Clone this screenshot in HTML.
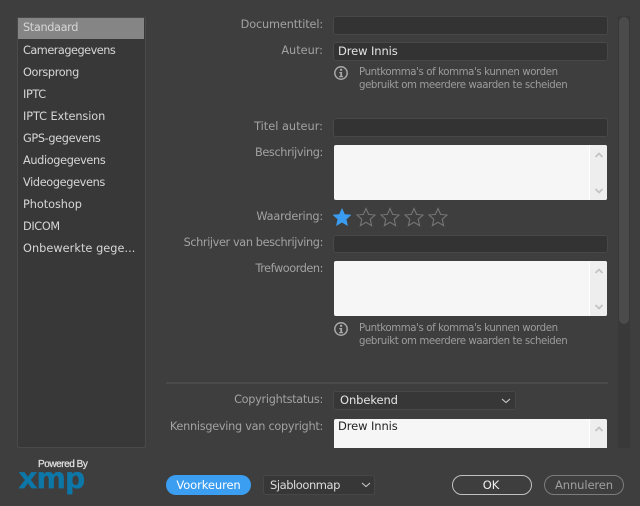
<!DOCTYPE html>
<html><head><meta charset="utf-8"><style>
*{box-sizing:border-box}
html,body{margin:0;padding:0;width:640px;height:506px;overflow:hidden;background:#3e3e3e}
body{position:relative;font-family:"DejaVu Sans",sans-serif;font-size:11px;color:#d8d8d8}
.a{position:absolute;white-space:nowrap}
.li{position:absolute;left:23px;height:22px;line-height:21px;color:#d6d6d6;font-size:11.3px;letter-spacing:-.36px;white-space:nowrap}
.lb{position:absolute;right:317px;text-align:right;color:#a2a2a2;font-size:11.3px;letter-spacing:-.3px;white-space:nowrap;line-height:16px}
.f{position:absolute;left:333px;width:275px;height:19px;background:#333;border:1px solid #484848;border-radius:3px;color:#e4e4e4;font-size:11.5px;line-height:17px;padding-left:4px;letter-spacing:-.1px}
.ta{position:absolute;left:334px;width:273px;background:#f6f6f6;border-radius:2px;overflow:hidden}
.sb{position:absolute;right:0;top:0;bottom:0;width:18px;background:#eeeeee;border-left:1px solid #fff}
.inf{position:absolute;left:359px;color:#9c9c9c;font-size:10.2px;line-height:13px;letter-spacing:-.4px;white-space:nowrap}
.btn{position:absolute;top:475px;height:20px;border-radius:10px;text-align:center;line-height:18px;font-size:11.5px;letter-spacing:-.1px}
</style></head><body>
<div class="a" style="left:17px;top:17px;width:129px;height:431px;background:#383838;border:1px solid #4a4a4a;border-radius:2px"></div>
<div class="a" style="left:18px;top:18px;width:126px;height:21px;background:#858585"></div>
<div class="li" style="top:17px">Standaard</div>
<div class="li" style="top:40px;letter-spacing:-.5px">Cameragegevens</div>
<div class="li" style="top:62px">Oorsprong</div>
<div class="li" style="top:84px">IPTC</div>
<div class="li" style="top:106px;letter-spacing:-.08px">IPTC Extension</div>
<div class="li" style="top:128px">GPS-gegevens</div>
<div class="li" style="top:150px">Audiogegevens</div>
<div class="li" style="top:172px">Videogegevens</div>
<div class="li" style="top:194px;letter-spacing:-.05px">Photoshop</div>
<div class="li" style="top:216px">DICOM</div>
<div class="li" style="top:238px;letter-spacing:.05px">Onbewerkte gege...</div>

<div class="lb" style="top:17px;letter-spacing:-.15px">Documenttitel:</div>
<div class="lb" style="top:43px;letter-spacing:0">Auteur:</div>
<div class="lb" style="top:119px;letter-spacing:.02px">Titel auteur:</div>
<div class="lb" style="top:145px;letter-spacing:-.37px">Beschrijving:</div>
<div class="lb" style="top:209px;letter-spacing:-.2px">Waardering:</div>
<div class="lb" style="top:235px;letter-spacing:-.39px">Schrijver van beschrijving:</div>
<div class="lb" style="top:261px;letter-spacing:-.45px">Trefwoorden:</div>
<div class="lb" style="top:392px">Copyrightstatus:</div>
<div class="lb" style="top:419px;letter-spacing:-.28px">Kennisgeving van copyright:</div>

<div class="f" style="top:16px"></div>
<div class="f" style="top:42px">Drew Innis</div>
<div class="f" style="top:118px"></div>
<div class="f" style="top:235px;height:18px"></div>

<svg class="a" style="left:333px;top:65px" width="16" height="16" viewBox="0 0 16 16"><circle cx="8" cy="8" r="6.2" fill="none" stroke="#a8a8a8" stroke-width="1.5"/><rect x="7" y="3.8" width="2.2" height="2" fill="#a8a8a8"/><path d="M6.3 7h2.8v4h1v1.2H6.2V11h1.1V8.2h-1z" fill="#a8a8a8"/></svg>
<div class="inf" style="top:66px">Puntkomma's of komma's kunnen worden<br>gebruikt om meerdere waarden te scheiden</div>
<svg class="a" style="left:333px;top:321px" width="16" height="16" viewBox="0 0 16 16"><circle cx="8" cy="8" r="6.2" fill="none" stroke="#a8a8a8" stroke-width="1.5"/><rect x="7" y="3.8" width="2.2" height="2" fill="#a8a8a8"/><path d="M6.3 7h2.8v4h1v1.2H6.2V11h1.1V8.2h-1z" fill="#a8a8a8"/></svg>
<div class="inf" style="top:322px">Puntkomma's of komma's kunnen worden<br>gebruikt om meerdere waarden te scheiden</div>

<div class="ta" style="top:145px;height:55px"><div class="sb"><svg class="a" style="left:4px;top:5px" width="10" height="45" viewBox="0 0 10 45"><path d="M1.5 7L5 3.5 8.500 7M1.500 39L5 42.500 8.500 39" fill="none" stroke="#c4c4c4" stroke-width="1.800"/></svg></div></div>
<div class="ta" style="top:261px;height:55px"><div class="sb"><svg class="a" style="left:4px;top:5px" width="10" height="45" viewBox="0 0 10 45"><path d="M1.5 7L5 3.5 8.500 7M1.500 39L5 42.500 8.500 39" fill="none" stroke="#c4c4c4" stroke-width="1.800"/></svg></div></div>
<div class="ta" style="top:419px;height:29px;border-radius:2px 2px 0 0;color:#222;font-size:11.500px;line-height:15px;padding-left:4px;letter-spacing:-.1px">Drew Innis<div class="sb"><svg class="a" style="left:4px;top:5px" width="10" height="12" viewBox="0 0 10 12"><path d="M1.500 7L5 3.500 8.500 7" fill="none" stroke="#c4c4c4" stroke-width="1.800"/></svg></div></div>

<svg class="a" style="left:330px;top:205px" width="120" height="24" viewBox="0 0 120 24">
<path d="M12 3.500l2.600 5.900 6.400.6-4.800 4.300 1.400 6.300L12 17.300 6.400 20.600l1.400-6.300L3 10l6.400-.6z" fill="#3a9cf0" stroke="#3a9cf0" stroke-width=".5"/>
<g fill="none" stroke="#757575" stroke-width="1.100">
<path transform="translate(24)" d="M12 3.500l2.600 5.900 6.400.6-4.800 4.300 1.400 6.300L12 17.300 6.400 20.600l1.400-6.300L3 10l6.400-.6z"/>
<path transform="translate(48)" d="M12 3.500l2.600 5.900 6.400.6-4.800 4.300 1.400 6.300L12 17.300 6.400 20.600l1.400-6.300L3 10l6.400-.6z"/>
<path transform="translate(72)" d="M12 3.500l2.600 5.900 6.400.6-4.800 4.300 1.400 6.300L12 17.300 6.400 20.600l1.400-6.300L3 10l6.400-.6z"/>
<path transform="translate(96)" d="M12 3.500l2.600 5.900 6.400.6-4.800 4.300 1.400 6.300L12 17.300 6.400 20.600l1.400-6.300L3 10l6.400-.6z"/>
</g></svg>

<div class="a" style="left:38px;top:459px;font-family:'Liberation Sans',sans-serif;font-size:10px;color:#e0e0e0;letter-spacing:-.45px;-webkit-text-stroke:.25px #e0e0e0">Powered By</div>
<svg class="a" style="left:15px;top:466px" width="76" height="32" viewBox="0 0 76 32"><text x="4" y="22" font-family="Liberation Sans,sans-serif" font-weight="bold" font-size="30" fill="#0d77a8" stroke="#0d77a8" stroke-width=".8" textLength="66" lengthAdjust="spacingAndGlyphs">xmp</text></svg>

<div class="a" style="left:166px;top:382px;width:442px;height:2px;background:#4a4a4a"></div>
<div class="f" style="top:391px;width:183px;height:19px;padding-left:6px;background:#373737">Onbekend<svg class="a" style="right:4px;top:5px" width="10" height="8" viewBox="0 0 10 8"><path d="M1 2l4 3.500L9 2" fill="none" stroke="#c8c8c8" stroke-width="1.100"/></svg></div>

<div class="a" style="left:618px;top:16px;width:12px;height:432px;background:#393939"></div>
<div class="a" style="left:619px;top:17px;width:10px;height:307px;background:#4b4b4b;border-radius:5px"></div>

<div class="btn" style="left:166px;width:85px;background:#3b9ef0;color:#fff;line-height:20px">Voorkeuren</div>
<div class="btn" style="left:263px;width:112px;background:#373737;border:1px solid #474747;border-radius:3px;text-align:left;padding-left:6px;color:#dcdcdc;letter-spacing:-.45px">Sjabloonmap<svg class="a" style="right:3px;top:5px" width="10" height="8" viewBox="0 0 10 8"><path d="M1 2l4 3.500L9 2" fill="none" stroke="#c8c8c8" stroke-width="1.100"/></svg></div>
<div class="btn" style="left:452px;width:80px;border:1.500px solid #c0c0c0;color:#f0f0f0;padding-right:2px">OK</div>
<div class="btn" style="left:544px;width:80px;border:1.500px solid #7c7c7c;color:#a0a0a0">Annuleren</div>
</body></html>
